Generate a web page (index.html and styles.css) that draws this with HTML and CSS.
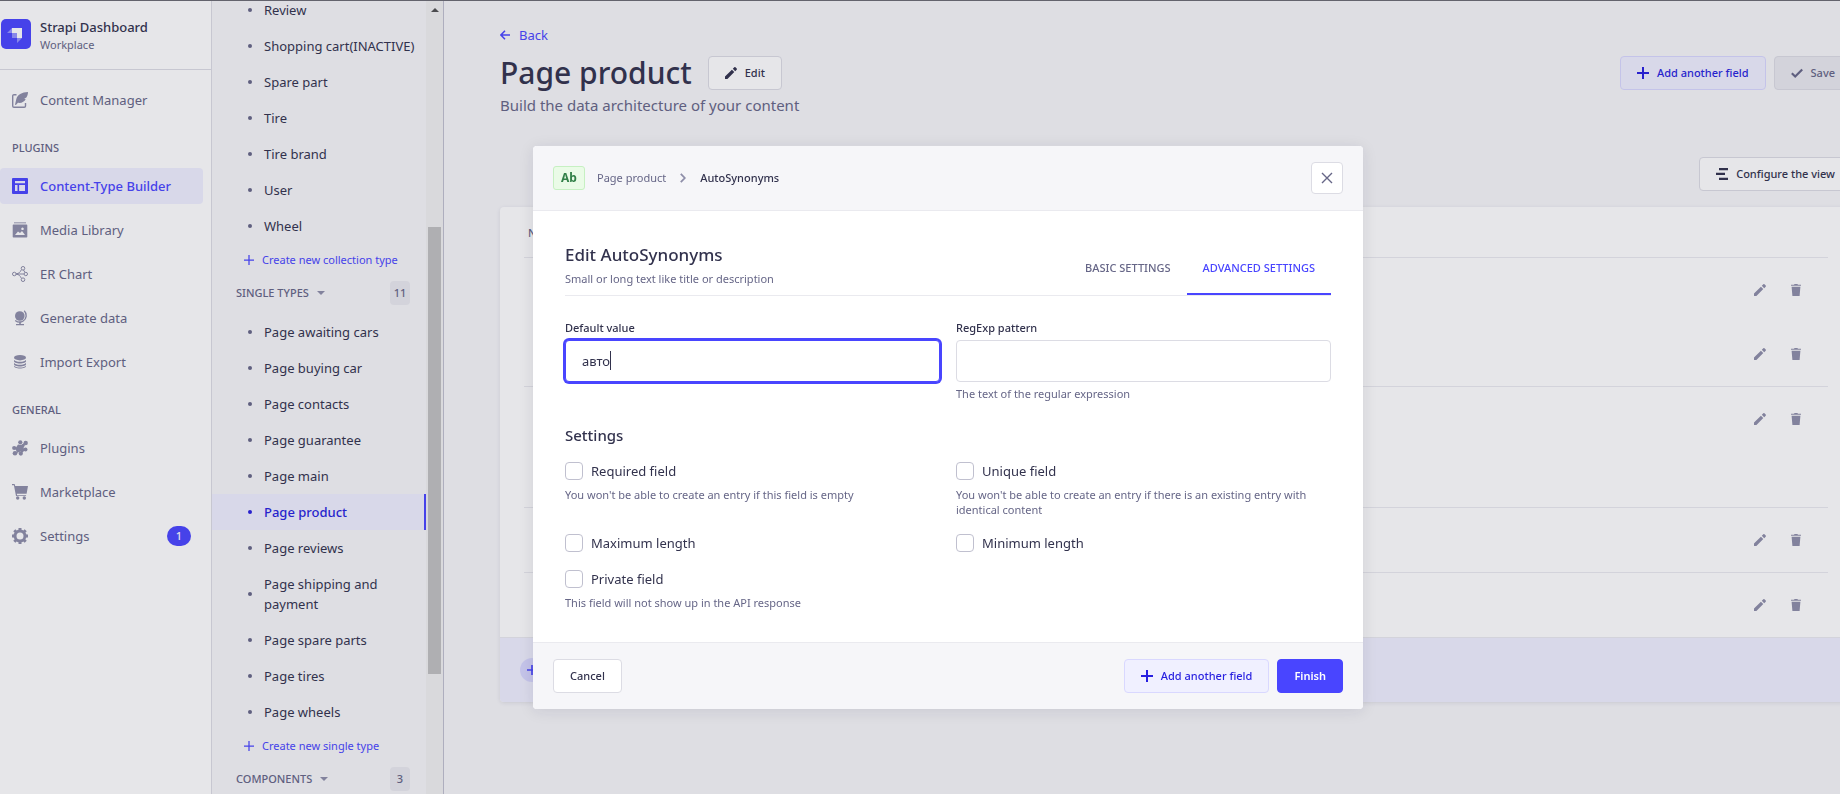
FILE: index.html
```html
<!DOCTYPE html>
<html lang="en">
<head>
<meta charset="utf-8">
<title>Strapi Dashboard</title>
<link rel="stylesheet" href="styles.css">
</head>
<body>
<svg class="sprite" aria-hidden="true">
  <symbol id="i-plus" viewBox="0 0 12 12"><path d="M5 0h2v5h5v2H7v5H5V7H0V5h5z"/></symbol>
  <symbol id="i-plus-thin" viewBox="0 0 12 12"><path d="M5.25 0h1.5v5.25H12v1.5H6.75V12h-1.5V6.75H0v-1.5h5.25z"/></symbol>
  <symbol id="i-pencil" viewBox="0 0 12 12"><path d="M0 9.6V12h2.4l6.9-6.9-2.4-2.4zM11.7 2.7a.9.9 0 0 0 0-1.2L10.5.3a.9.9 0 0 0-1.2 0L7.8 1.8l2.4 2.4z"/></symbol>
  <symbol id="i-trash" viewBox="0 0 12 12"><path d="M1 .8h3L4.6 0h2.8L8 .8h3v1H1zM1.6 2.8h8.8L9.6 12H2.4z"/></symbol>
  <symbol id="i-caret" viewBox="0 0 8 4"><path d="M0 0h8L4 4z"/></symbol>
</svg>

<div class="app">
  <nav class="nav" aria-label="Main">
    <div class="brand">
      <svg class="logo" viewBox="0 0 30 30" aria-hidden="true"><rect width="30" height="30" rx="5" fill="#4945ff"/><path d="M11 9h10v10h-5v-5h-5z" fill="#fff"/><path d="M11 9v5H6zM16 19h5l-5 5z" fill="#9593ff"/><path d="M11 14h5v5h-4.500a.5.5 0 0 1-.5-.5z" fill="#9593ff"/></svg>
      <div class="brand-text">
        <div class="brand-name">Strapi Dashboard</div>
        <div class="brand-sub">Workplace</div>
      </div>
    </div>
    <ul class="nav-list">
      <li><a class="nav-link" href="#"><svg viewBox="0 0 16 16"><path d="M16 0C10 .2 5.200 2.600 4.200 7.500L3 12.800l.9.200 2-2.200c3.800.5 6.500-1 7.800-3.800l-1.600-.2 2.300-1.200C15.400 4 16 2 16 0z"/><path d="M4.500 2.700H2A1.300 1.300 0 0 0 .7 4v10A1.300 1.300 0 0 0 2 15.300h10.200a1.300 1.300 0 0 0 1.300-1.300v-3" fill="none" stroke="currentColor" stroke-width="1.400"/></svg>Content Manager</a></li>
    </ul>
    <h2 class="nav-head">Plugins</h2>
    <ul class="nav-list">
      <li><a class="nav-link active" href="#"><svg viewBox="0 0 16 16"><path fill-rule="evenodd" d="M1 0h14a1 1 0 0 1 1 1v14a1 1 0 0 1-1 1H1a1 1 0 0 1-1-1V1a1 1 0 0 1 1-1zm2 3v2.300h10V3zm0 3.900V13h2.500V6.900zm4.100 0V13H13V6.900z"/></svg>Content-Type Builder</a></li>
      <li><a class="nav-link" href="#"><svg viewBox="0 0 16 16"><path d="M2 0h12v1.500H2z" opacity=".6"/><path fill-rule="evenodd" d="M1.500 2.500h13a.8.8 0 0 1 .8.8v11.400a.8.800 0 0 1-.8.8h-13a.8.8 0 0 1-.8-.8V3.300a.8.800 0 0 1 .8-.8zM3 13h10l-3-4-2 2-2-1.500zm7.500-7.500a1.300 1.300 0 1 0 .01 0z"/></svg>Media Library</a></li>
      <li><a class="nav-link" href="#"><svg viewBox="0 0 16 16"><g fill="none" stroke="currentColor"><circle cx="2.300" cy="8" r="1.800"/><circle cx="11" cy="2.300" r="1.800"/><circle cx="13.800" cy="8" r="1.700"/><circle cx="11" cy="13.700" r="1.800"/><path d="M4.100 7.700c3 0 4-1.500 5.300-4M4.100 8.300c3 0 4 1.500 5.300 4M4.100 8h8M11.500 4l1.500 2.500"/></g></svg>ER Chart</a></li>
      <li><a class="nav-link" href="#"><svg viewBox="0 0 16 16"><circle cx="7.800" cy="6" r="4.800"/><path d="M12.200.8a6.500 6.500 0 0 1-1 10.200c-2.500 1.700-5.500 1.400-8-.5" fill="none" stroke="currentColor" stroke-width="1.300"/><path d="M7.200 11.500h1.600V14H12v1.300H4V14h3.200z"/></svg>Generate data</a></li>
      <li><a class="nav-link" href="#"><svg viewBox="0 0 16 16"><ellipse cx="8" cy="3.700" rx="6" ry="2.700"/><path d="M2 5.700c1 1.600 3 2 6 2s5-.4 6-2v1.600c0 1.200-2.600 2.200-6 2.200s-6-1-6-2.200zM2 8.700c1 1.600 3 2 6 2s5-.4 6-2v1.600c0 1.200-2.600 2.200-6 2.200s-6-1-6-2.200zM2 11.500c1 1.600 3 2 6 2s5-.4 6-2v.8c0 1.200-2.600 2.200-6 2.200s-6-1-6-2.200z"/></svg>Import Export</a></li>
    </ul>
    <h2 class="nav-head">General</h2>
    <ul class="nav-list">
      <li><a class="nav-link" href="#"><svg viewBox="0 0 16 16"><path d="M6 4.500 9 5l3-2 1 2-1.500 3 1.500 2-3 3-1.500-1.500L5 13l-1-3L3 9z"/><circle cx="8.300" cy="2.300" r="2.100"/><circle cx="13.700" cy="3" r="2.200"/><circle cx="13.500" cy="9.500" r="2"/><circle cx="8.800" cy="13.600" r="2.100"/><circle cx="3" cy="13.300" r="2.300"/><circle cx="2.200" cy="8" r="2.100"/></svg>Plugins</a></li>
      <li><a class="nav-link" href="#"><svg viewBox="0 0 16 16"><path d="M0 0h2.600l.6 2H16l-1.400 7.800H4.800l.3 1.400h9V12H4L1.900 1.200H0z"/><circle cx="5.700" cy="14" r="1.700"/><circle cx="12.300" cy="14" r="1.700"/></svg>Marketplace</a></li>
      <li><a class="nav-link" href="#"><svg viewBox="0 0 16 16"><circle cx="8" cy="8" r="5" fill="none" stroke="currentColor" stroke-width="3"/><path d="M8 0v3M8 13v3M0 8h3M13 8h3M2.300 2.300l2 2M11.700 11.700l2 2M2.300 13.700l2-2M11.700 4.300l2-2" stroke="currentColor" stroke-width="3"/></svg>Settings<span class="count">1</span></a></li>
    </ul>
  </nav>

  <aside class="subnav" aria-label="Content types">
    <div class="subnav-scroll">
      <ul class="types">
        <li><a href="#">Review</a></li>
        <li><a href="#">Shopping cart(INACTIVE)</a></li>
        <li><a href="#">Spare part</a></li>
        <li><a href="#">Tire</a></li>
        <li><a href="#">Tire brand</a></li>
        <li><a href="#">User</a></li>
        <li><a href="#">Wheel</a></li>
      </ul>
      <a class="create" href="#"><svg><use href="#i-plus-thin"/></svg>Create new collection type</a>
      <div class="group"><button type="button">Single types<svg><use href="#i-caret"/></svg></button><span class="tally">11</span></div>
      <ul class="types">
        <li><a href="#">Page awaiting cars</a></li>
        <li><a href="#">Page buying car</a></li>
        <li><a href="#">Page contacts</a></li>
        <li><a href="#">Page guarantee</a></li>
        <li><a href="#">Page main</a></li>
        <li><a class="current" href="#">Page product</a></li>
        <li><a href="#">Page reviews</a></li>
        <li><a href="#">Page shipping and payment</a></li>
        <li><a href="#">Page spare parts</a></li>
        <li><a href="#">Page tires</a></li>
        <li><a href="#">Page wheels</a></li>
      </ul>
      <a class="create" href="#"><svg><use href="#i-plus-thin"/></svg>Create new single type</a>
      <div class="group"><button type="button">Components<svg><use href="#i-caret"/></svg></button><span class="tally">3</span></div>
    </div>
    <div class="track"><svg viewBox="0 0 8 4"><path d="M0 4h8L4 0z"/></svg><div class="thumb"></div></div>
  </aside>

  <main class="main">
    <a class="back" href="#"><svg viewBox="0 0 10 10"><path d="M5 .7.9 5 5 9.300M1 5h9" fill="none" stroke="currentColor" stroke-width="1.500"/></svg>Back</a>
    <div class="title-row">
      <h1>Page product</h1>
      <button class="btn" type="button"><svg><use href="#i-pencil"/></svg>Edit</button>
      <div class="title-actions">
        <button class="btn soft" type="button"><svg><use href="#i-plus"/></svg>Add another field</button>
        <button class="btn off" type="button"><svg viewBox="0 0 12 12"><path d="m.8 6.300 3.400 3.200 7-7" fill="none" stroke="currentColor" stroke-width="2.200"/></svg>Save</button>
      </div>
    </div>
    <p class="lead">Build the data architecture of your content</p>
    <div class="view-row"><button class="btn" type="button"><svg viewBox="0 0 12 12"><path d="M3 0h9v2.300H3zM0 4.800h9v2.300H0zM3 9.700h9V12H3z"/></svg>Configure the view</button></div>
    <section class="card">
      <table>
        <thead><tr><th scope="col">Name</th><th scope="col"></th></tr></thead>
        <tbody>
          <tr class="joined"><td></td><td><div class="acts"><button type="button" aria-label="Edit"><svg><use href="#i-pencil"/></svg></button><button type="button" aria-label="Delete"><svg><use href="#i-trash"/></svg></button></div></td></tr>
          <tr><td></td><td><div class="acts"><button type="button" aria-label="Edit"><svg><use href="#i-pencil"/></svg></button><button type="button" aria-label="Delete"><svg><use href="#i-trash"/></svg></button></div></td></tr>
          <tr class="nested"><td></td><td><div class="acts"><button type="button" aria-label="Edit"><svg><use href="#i-pencil"/></svg></button><button type="button" aria-label="Delete"><svg><use href="#i-trash"/></svg></button></div></td></tr>
          <tr><td></td><td><div class="acts"><button type="button" aria-label="Edit"><svg><use href="#i-pencil"/></svg></button><button type="button" aria-label="Delete"><svg><use href="#i-trash"/></svg></button></div></td></tr>
          <tr class="joined"><td></td><td><div class="acts"><button type="button" aria-label="Edit"><svg><use href="#i-pencil"/></svg></button><button type="button" aria-label="Delete"><svg><use href="#i-trash"/></svg></button></div></td></tr>
        </tbody>
      </table>
      <button class="card-add" type="button" aria-label="Add another field"><span><svg><use href="#i-plus"/></svg></span></button>
    </section>
  </main>
</div>

<div class="scrim"></div>
<div class="stage">
  <div class="modal" role="dialog" aria-modal="true" aria-labelledby="dlg-title">
    <header class="modal-head">
      <span class="kind">Ab</span>
      <ol class="crumbs">
        <li>Page product</li>
        <li><svg viewBox="0 0 6 10" aria-hidden="true"><path d="m.8.8 4 4.200-4 4.200" fill="none" stroke="currentColor" stroke-width="1.800"/></svg></li>
        <li class="here">AutoSynonyms</li>
      </ol>
      <button class="close" type="button" aria-label="Close"><svg viewBox="0 0 12 12"><path d="m1 1 10 10M11 1 1 11" stroke="currentColor" stroke-width="1.400"/></svg></button>
    </header>
    <form class="modal-body">
      <div class="tab-row">
        <div>
          <h2 id="dlg-title">Edit AutoSynonyms</h2>
          <p class="hint">Small or long text like title or description</p>
        </div>
        <div class="tabs" role="tablist">
          <button type="button" role="tab" aria-selected="false">Basic settings</button>
          <button type="button" role="tab" aria-selected="true">Advanced settings</button>
        </div>
      </div>
      <div class="fields">
        <div class="field"><label for="def">Default value</label><div class="box"><input class="focused" id="def" type="text" value="авто"><span class="caret"></span></div></div>
        <div class="field"><label for="re">RegExp pattern</label><div class="box"><input id="re" type="text"></div><p class="hint">The text of the regular expression</p></div>
      </div>
      <h3>Settings</h3>
      <div class="options">
        <div><label class="check"><input type="checkbox">Required field</label><p class="hint">You won't be able to create an entry if this field is empty</p></div>
        <div><label class="check"><input type="checkbox">Unique field</label><p class="hint">You won't be able to create an entry if there is an existing entry with identical content</p></div>
        <div><label class="check"><input type="checkbox">Maximum length</label></div>
        <div><label class="check"><input type="checkbox">Minimum length</label></div>
        <div><label class="check"><input type="checkbox">Private field</label><p class="hint">This field will not show up in the API response</p></div>
      </div>
    </form>
    <footer class="modal-foot">
      <button class="btn" type="button">Cancel</button>
      <button class="btn soft push" type="button"><svg><use href="#i-plus"/></svg>Add another field</button>
      <button class="btn solid" type="button">Finish</button>
    </footer>
  </div>
</div>
</body>
</html>
```

FILE: styles.css
```css
:root {
  --n0: #ffffff;
  --n100: #f6f6f9;
  --n150: #eaeaef;
  --n200: #dcdce4;
  --n300: #c0c0cf;
  --n500: #8e8ea9;
  --n600: #666687;
  --n800: #32324d;
  --p100: #f0f0ff;
  --p200: #d9d8ff;
  --p600: #4945ff;
  --p700: #271fe0;
}

* { box-sizing: border-box; }

body {
  margin: 0;
  overflow: hidden;
  font: 13px/20px "Noto Sans", "Open Sans", sans-serif;
  color: var(--n800);
  background: var(--n100);
}

ul, ol { margin: 0; padding: 0; list-style: none; }
h1, h2, h3, p { margin: 0; }
a { color: inherit; text-decoration: none; }
button { font: inherit; color: inherit; background: none; border: 0; padding: 0; cursor: pointer; }
svg { display: block; flex: none; fill: currentColor; }
.sprite { position: absolute; width: 0; height: 0; }

.app {
  display: flex;
  height: 100vh;
  border-top: 1px solid #6a6a72;
}

/* Main navigation */
.nav {
  flex: none;
  width: 212px;
  background: var(--n0);
  border-right: 1px solid var(--n200);
}
.brand {
  display: flex;
  gap: 9px;
  align-items: center;
  height: 69px;
  padding: 0 0 2px 1px;
  border-bottom: 1px solid var(--n200);
}
.logo { width: 30px; height: 30px; }
.brand-text { padding-top: 4px; line-height: 18px; }
.brand-name { font-weight: 500; }
.brand-sub { font-size: 11px; color: var(--n600); }
.nav-list { display: grid; gap: 8px; padding: 12px 8px 12px 0; }
.nav-link {
  display: flex;
  gap: 12px;
  align-items: center;
  height: 36px;
  padding: 0 12px;
  color: var(--n600);
  border-radius: 4px;
}
.nav-link svg { width: 16px; height: 16px; color: var(--n500); }
.nav-link.active { color: var(--p600); background: var(--p100); font-weight: 500; }
.nav-link.active svg { color: var(--p600); }
.nav-head {
  padding: 10px 12px 0;
  font-size: 11px;
  font-weight: 500;
  line-height: 16px;
  text-transform: uppercase;
  color: var(--n600);
}
.count {
  margin-left: auto;
  width: 24px;
  border-radius: 10px;
  background: var(--p600);
  color: var(--n0);
  font-size: 11px;
  font-weight: 500;
  text-align: center;
}

/* Content-type list */
.subnav {
  display: flex;
  flex: none;
  width: 232px;
  border-right: 1px solid var(--n300);
}
.subnav-scroll { flex: 1; min-width: 0; overflow: hidden; }
.subnav-scroll > .types:first-child { margin-top: -9px; }
.types a {
  display: flex;
  gap: 12px;
  align-items: center;
  padding: 8px 0 8px 36px;
}
.types a::before {
  content: "";
  flex: none;
  width: 4px;
  height: 4px;
  border-radius: 50%;
  background: var(--n600);
}
.types .current {
  color: var(--p700);
  background: var(--p100);
  border-right: 2px solid var(--p600);
  font-weight: 500;
}
.types .current::before { background: var(--p700); }
.create {
  display: flex;
  gap: 8px;
  align-items: center;
  height: 32px;
  padding-left: 32px;
  font-size: 11px;
  color: var(--p600);
}
.create svg { width: 10px; height: 10px; }
.group {
  display: flex;
  justify-content: space-between;
  padding: 5px 16px 9px 24px;
  font-size: 11px;
  font-weight: 500;
  line-height: 24px;
  color: var(--n600);
}
.group button { display: flex; gap: 8px; align-items: center; text-transform: uppercase; }
.group svg { width: 8px; height: 4px; color: var(--n500); }
.tally {
  width: 20px;
  border-radius: 4px;
  background: var(--n150);
  text-align: center;
}
.track {
  display: flex;
  flex-direction: column;
  align-items: center;
  width: 17px;
  padding-top: 7px;
  background: #f1f1f1;
}
.track svg { width: 8px; height: 4px; color: #505050; }
.thumb { width: 13px; height: 56.25vh; margin-top: 215px; background: #c1c1c1; }

/* Page */
.main { flex: 1; min-width: 0; margin-right: -12px; padding: 24px 0 0 56px; }
.back { display: inline-flex; gap: 9px; align-items: center; color: var(--p600); }
.back svg { width: 10px; height: 10px; }
.title-row { display: flex; gap: 16px; align-items: center; margin-top: 8px; }
h1 { font-size: 30px; line-height: 40px; font-weight: 500; }
.title-actions { display: flex; gap: 8px; margin-left: auto; }
.lead { font-size: 15px; line-height: 24px; color: var(--n600); }
.view-row { display: flex; justify-content: flex-end; margin: 40px 0 16px; }

.btn {
  display: inline-flex;
  gap: 8px;
  align-items: center;
  height: 34px;
  padding: 0 16px;
  border: 1px solid var(--n200);
  border-radius: 4px;
  background: var(--n0);
  font-size: 11px;
  font-weight: 500;
  white-space: nowrap;
}
.btn svg { width: 12px; height: 12px; }
.soft { color: var(--p700); background: var(--p100); border-color: var(--p200); }
.off { color: var(--n600); background: var(--n150); border-color: var(--n200); }
.solid { color: var(--n0); background: var(--p600); border-color: var(--p600); font-weight: 600; }

.card {
  border-radius: 4px;
  background: var(--n0);
  box-shadow: 0 1px 4px rgba(33, 33, 52, .1);
}
table { width: calc(100% - 48px); margin: 0 24px; border-collapse: separate; border-spacing: 0; }
th {
  height: 51px;
  padding: 2px 4px 0;
  border-bottom: 1px solid var(--n150);
  font-size: 11px;
  font-weight: 500;
  text-align: left;
  text-transform: uppercase;
  color: var(--n600);
}
td { height: 65px; padding: 0; border-bottom: 1px solid var(--n150); vertical-align: top; }
.joined td { height: 64px; border-bottom: 0; }
.nested td { height: 121px; }
.acts { display: flex; gap: 24px; justify-content: flex-end; padding: 26px 26px 0 0; color: var(--n500); }
.acts svg { width: 12px; height: 12px; }
.card-add {
  display: flex;
  align-items: center;
  width: 100%;
  height: 65px;
  padding-left: 20px;
  border-top: 1px solid var(--n150);
  border-radius: 0 0 4px 4px;
  background: var(--p100);
  color: var(--p600);
}
.card-add span { display: grid; place-items: center; width: 24px; height: 24px; border-radius: 50%; background: var(--p200); }
.card-add svg { width: 10px; height: 10px; }

/* Dialog */
.scrim { position: fixed; inset: 0; background: rgba(50, 50, 77, .12); }
.stage {
  position: fixed;
  inset: 0 -56px -60px 0;
  display: flex;
  align-items: center;
  justify-content: center;
}
.modal {
  width: 830px;
  max-width: 90vw;
  border-radius: 4px;
  background: var(--n0);
  box-shadow: 0 2px 15px rgba(33, 33, 52, .1);
  overflow: hidden;
}
.modal-head, .modal-foot { display: flex; align-items: center; padding: 16px 20px; background: var(--n100); }
.modal-head { border-bottom: 1px solid var(--n150); }
.modal-foot { gap: 8px; border-top: 1px solid var(--n150); }
.push { margin-left: auto; }
.kind {
  width: 32px;
  border: 1px solid #c6f0c2;
  border-radius: 3px;
  background: #eafbe7;
  color: #328048;
  font-size: 12px;
  font-weight: 700;
  line-height: 22px;
  text-align: center;
}
.crumbs { display: flex; align-items: center; gap: 14px; margin-left: 12px; font-size: 11px; color: var(--n600); }
.crumbs svg { width: 6px; height: 10px; color: var(--n500); }
.here { color: var(--n800); font-weight: 500; }
.close {
  display: grid;
  place-items: center;
  width: 32px;
  height: 32px;
  margin-left: auto;
  border: 1px solid var(--n200);
  border-radius: 4px;
  background: var(--n0);
  color: var(--n600);
}
.close svg { width: 12px; height: 12px; }

.modal-body { padding: 32px; }
.tab-row {
  display: flex;
  justify-content: space-between;
  border-bottom: 1px solid var(--n150);
}
.tab-row h2 { font-size: 17px; font-weight: 500; line-height: 24px; }
.hint { font-size: 11px; line-height: 15px; color: var(--n600); }
.tab-row .hint { margin-top: 4px; }
.tab-row > div:first-child { padding-bottom: 9px; }
.tabs { display: flex; }
.tabs button {
  padding: 0 16px;
  border-bottom: 2px solid transparent;
  font-size: 11px;
  font-weight: 500;
  text-transform: uppercase;
  color: var(--n600);
}
.tabs button[aria-selected="true"] { color: var(--p600); border-bottom-color: var(--p600); }

.fields { display: grid; grid-template-columns: 1fr 1fr; gap: 16px; margin-top: 24px; }
.field > label { display: block; font-size: 11px; font-weight: 500; line-height: 16px; }
.box { position: relative; margin: 4px 0; }
.box input {
  display: block;
  width: 100%;
  height: 42px;
  padding: 0 16px;
  border: 1px solid var(--n200);
  border-radius: 4px;
  outline: 0;
  background: var(--n0);
  color: var(--n800);
  font: inherit;
}
.box .focused { border-color: var(--p600); box-shadow: 0 0 0 2px var(--p600); }
.caret { position: absolute; top: 11px; left: 45px; width: 1px; height: 19px; background: var(--n800); }
h3 { margin: 24px 0 16px; font-size: 15px; font-weight: 500; line-height: 20px; }
.options { display: grid; grid-template-columns: 1fr 1fr; gap: 16px; }
.check { display: flex; gap: 8px; align-items: center; }
.check input {
  appearance: none;
  width: 18px;
  height: 18px;
  margin: 0;
  border: 1px solid var(--n300);
  border-radius: 4px;
  background: var(--n0);
}
.options .hint { margin-top: 6px; }
```
